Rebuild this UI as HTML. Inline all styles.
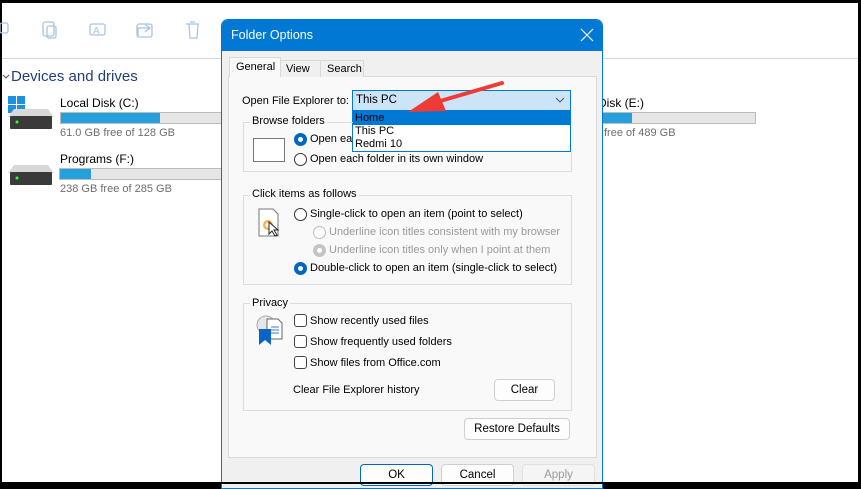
<!DOCTYPE html>
<html><head><meta charset="utf-8"><style>
*{margin:0;padding:0;box-sizing:border-box}
body{width:861px;height:484px;overflow:hidden;background:#000;font-family:"Liberation Sans",sans-serif;font-size:11px;color:#000;position:relative}
.a{position:absolute;white-space:nowrap}
.bar{position:absolute;height:12px;background:#e6e6e6;border:1px solid #bcbcbc}
.bar i{display:block;height:100%;background:#26a0da}
.rad{position:absolute;width:13px;height:13px;border-radius:50%;border:1px solid #333;background:#fff}
.rad.on{border:4px solid #0067c0}
.rad.dis{border-color:#bbb}
.rad.dis2{border:4px solid #c4c4c4}
.chk{position:absolute;width:13px;height:13px;border:1px solid #444;border-radius:3px;background:#fff}
.btn{position:absolute;height:22px;border:1px solid #cfcfcf;border-radius:4px;background:#fdfdfd;text-align:center;line-height:20px;font-size:11.5px}
.grp{position:absolute;border:1px solid #dcdcdc}
.lbl{position:absolute;background:#f9f9f9;padding:0 2px;font-size:11px}
</style></head><body>
<div class="a" style="left:2px;top:3px;width:856px;height:479px;background:#fff"></div>
<div class="a" style="left:2px;top:58px;width:856px;height:1px;background:#d4d4d4"></div>
<svg class="a" style="left:0;top:18px" width="210" height="24" fill="none" stroke="#a9c4e4" stroke-width="1.3">
<rect x="0" y="5" width="8" height="10" rx="2"/>
<rect x="43" y="4" width="11" height="14" rx="2"/><rect x="47" y="8" width="9" height="12" rx="2"/>
<rect x="90" y="6" width="15" height="11" rx="2"/><text x="93" y="16" font-size="10" fill="#a9c4e4" stroke="none" font-family="Liberation Sans">A</text>
<path d="M138 18v-8h6M145 6l5 4-5 4M140 10h9"/><rect x="137" y="6" width="15" height="13" rx="2"/>
<path d="M186 6h13M189 6l1 14h7l1-14M190 4h5"/>
</svg>
<svg class="a" style="left:2px;top:73px" width="8" height="8"><path d="M1 2l3 3 3-3" stroke="#555" fill="none"/></svg>
<div class="a" style="left:11px;top:68px;font-size:15px;color:#1e3f7a">Devices and drives</div>
<svg class="a" style="left:8px;top:96px" width="18" height="18"><g fill="#1e90e0"><rect x="0" y="0" width="8" height="8"/><rect x="9" y="0" width="8" height="8"/><rect x="0" y="9" width="8" height="8"/><rect x="9" y="9" width="8" height="8"/></g></svg>
<svg class="a" style="left:8px;top:107px" width="46" height="26"><path d="M6 2h34l6 8H0z" fill="#d8d8d8"/><rect x="2" y="9" width="42" height="13" rx="1" fill="#3a3a3a"/><circle cx="9" cy="15" r="1.5" fill="#3f3"/></svg>
<svg class="a" style="left:8px;top:163px" width="46" height="26"><path d="M6 2h34l6 8H0z" fill="#d8d8d8"/><rect x="2" y="9" width="42" height="13" rx="1" fill="#3a3a3a"/><circle cx="9" cy="15" r="1.5" fill="#3f3"/></svg>
<div class="a" style="left:60px;top:96px;font-size:12px">Local Disk (C:)</div>
<div class="bar" style="left:60px;top:112px;width:170px"><i style="width:99px"></i></div>
<div class="a" style="left:60px;top:127px;color:#6d6d6d">61.0 GB free of 128 GB</div>
<div class="a" style="left:60px;top:152px;font-size:12px">Programs (F:)</div>
<div class="bar" style="left:59px;top:168px;width:170px"><i style="width:31px"></i></div>
<div class="a" style="left:60px;top:183px;color:#6d6d6d">238 GB free of 285 GB</div>
<div class="a" style="left:598px;top:96px;font-size:12px">Disk (E:)</div>
<div class="bar" style="left:600px;top:112px;width:156px"><i style="width:31px"></i></div>
<div class="a" style="left:604px;top:127px;color:#6d6d6d">free of 489 GB</div>

<div class="a" style="left:221px;top:19px;width:382px;height:470px;background:#f0f0f0;border:1px solid #0078d4;border-radius:7px 7px 0 0;overflow:hidden">
<div class="a" style="left:0;top:0;width:382px;height:31px;background:#0078d4"></div>
<div class="a" style="left:9px;top:8px;color:#fff;font-size:12.5px">Folder Options</div>
<svg class="a" style="left:358px;top:8px" width="14" height="14"><path d="M1 1l12 12M13 1L1 13" stroke="#fff" stroke-width="1.2"/></svg>
</div>
<div class="a" style="left:228px;top:76px;width:369px;height:382px;background:#f9f9f9;border:1px solid #d9d9d9"></div>
<div class="a" style="left:280px;top:60px;width:41px;height:17px;border:1px solid #d9d9d9;border-bottom:none;background:#f0f0f0;padding:2px 0 0 5px">View</div>
<div class="a" style="left:320px;top:60px;width:44px;height:17px;border:1px solid #d9d9d9;border-bottom:none;background:#f0f0f0;padding:2px 0 0 6px">Search</div>
<div class="a" style="left:229px;top:57px;width:52px;height:20px;border:1px solid #d9d9d9;border-bottom:none;background:#f9f9f9;padding:3px 0 0 6px">General</div>

<div class="a" style="left:242px;top:95px">Open File Explorer to:</div>
<div class="a" style="left:352px;top:90px;width:219px;height:21px;background:#cce4f7;border:1px solid #0078d4;padding:3px 0 0 3px;font-size:11.5px">This PC</div>
<svg class="a" style="left:555px;top:97px" width="10" height="6"><path d="M1 1l4 4 4-4" stroke="#555" fill="none"/></svg>
<div class="a" style="left:352px;top:111px;width:219px;height:41px;background:#fff;border:1px solid #0078d4"></div>
<div class="a" style="left:353px;top:112px;width:217px;height:13px;background:#0078d4"></div>
<div class="a" style="left:355px;top:112px;line-height:13px">Home</div>
<div class="a" style="left:355px;top:125px;line-height:13px">This PC</div>
<div class="a" style="left:355px;top:138px;line-height:13px">Redmi 10</div>
<svg class="a" style="left:400px;top:78px" width="105" height="45"><path d="M102 5L30 26" stroke="#ee3b36" stroke-width="4" stroke-linecap="round"/><path d="M8 34L38 14L46 33z" fill="#ee3b36"/></svg>

<div class="grp" style="left:243px;top:122px;width:110px;height:50px;border-right:none"></div>
<div class="a" style="left:571px;top:152px;width:1px;height:20px;background:#dcdcdc"></div>
<div class="a" style="left:353px;top:171px;width:219px;height:1px;background:#dcdcdc"></div>
<div class="lbl" style="left:250px;top:115px">Browse folders</div>
<div class="a" style="left:253px;top:138px;width:32px;height:24px;border:1px solid #777;background:#fff"></div>
<div class="rad on" style="left:294px;top:133px"></div>
<div class="a" style="left:310px;top:133px">Open ea</div>
<div class="rad" style="left:294px;top:153px"></div>
<div class="a" style="left:310px;top:153px">Open each folder in its own window</div>

<div class="grp" style="left:243px;top:195px;width:329px;height:90px"></div>
<div class="lbl" style="left:250px;top:188px">Click items as follows</div>
<svg class="a" style="left:258px;top:208px" width="24" height="32"><path d="M1 1h14l5 5v22H1z" fill="#fff" stroke="#777"/><circle cx="10" cy="17" r="5" fill="#f7b04a"/><circle cx="10" cy="17" r="2.5" fill="#fff"/><path d="M11 14v12l3-3 3 5 2-1-3-5h4z" fill="#fff" stroke="#222"/></svg>
<div class="rad" style="left:294px;top:208px"></div>
<div class="a" style="left:310px;top:208px">Single-click to open an item (point to select)</div>
<div class="rad dis" style="left:313px;top:226px"></div>
<div class="a" style="left:329px;top:226px;color:#9a9a9a">Underline icon titles consistent with my browser</div>
<div class="rad dis2" style="left:313px;top:244px"></div>
<div class="a" style="left:329px;top:244px;color:#9a9a9a">Underline icon titles only when I point at them</div>
<div class="rad on" style="left:294px;top:262px"></div>
<div class="a" style="left:310px;top:262px">Double-click to open an item (single-click to select)</div>

<div class="grp" style="left:243px;top:303px;width:329px;height:108px"></div>
<div class="lbl" style="left:250px;top:297px">Privacy</div>
<svg class="a" style="left:255px;top:315px" width="32" height="32"><circle cx="11" cy="10" r="9" fill="#e6e6e6" stroke="#aaa"/><path d="M12 4h11l4 4v16H12z" fill="#fff" stroke="#666"/><path d="M16 12h8M16 15h8M16 18h8" stroke="#3c78c8"/><path d="M4 14h12v16l-6-5-6 5z" fill="#0a64c8"/></svg>
<div class="chk" style="left:294px;top:314px"></div>
<div class="a" style="left:310px;top:315px">Show recently used files</div>
<div class="chk" style="left:294px;top:335px"></div>
<div class="a" style="left:310px;top:336px">Show frequently used folders</div>
<div class="chk" style="left:294px;top:356px"></div>
<div class="a" style="left:310px;top:357px">Show files from Office.com</div>
<div class="a" style="left:293px;top:384px">Clear File Explorer history</div>
<div class="btn" style="left:494px;top:379px;width:61px">Clear</div>
<div class="btn" style="left:464px;top:418px;width:106px">Restore Defaults</div>

<div class="btn" style="left:360px;top:464px;width:73px;border:1px solid #0067c0">OK</div>
<div class="btn" style="left:441px;top:464px;width:73px">Cancel</div>
<div class="btn" style="left:522px;top:464px;width:73px;color:#9a9a9a;background:#f5f5f5;border-color:#e0e0e0">Apply</div>
<div class="a" style="left:0;top:482px;width:861px;height:2px;background:#000"></div>
</body></html>
